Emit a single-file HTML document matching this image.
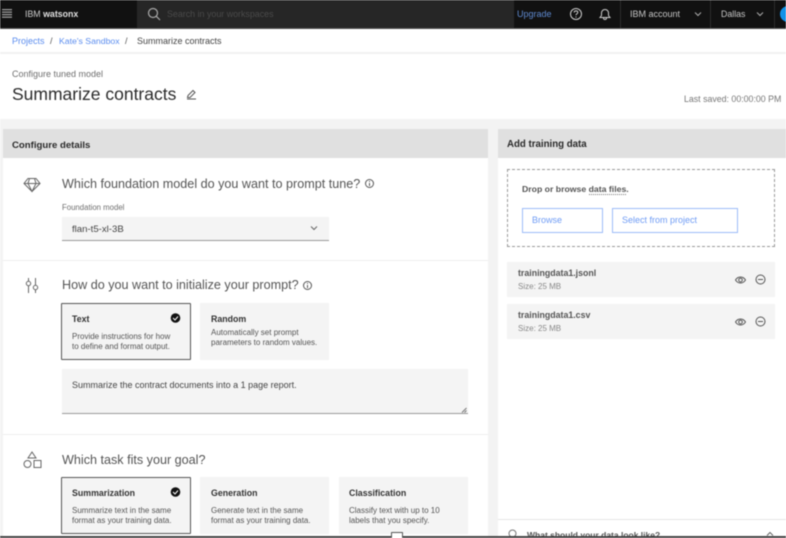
<!DOCTYPE html>
<html><head><meta charset="utf-8"><style>
html,body{margin:0;padding:0;background:#fff}
#p{position:relative;width:786px;height:538px;overflow:hidden;background:#fff;font-family:"Liberation Sans",sans-serif;color:#333;filter:blur(.45px)}
#p div,#p svg{position:absolute}
.t{white-space:nowrap;line-height:1}
.card{background:#f4f4f4;box-sizing:border-box}
.sel{border:1.2px solid #555;border-radius:1px}
.h{font-size:12.6px;color:#555}
.b{font-size:8.8px;font-weight:bold;color:#333}
.s{font-size:8px;color:#555;line-height:10px;white-space:nowrap}
</style></head><body><div id="p">
<div style="left:0;top:0;width:786px;height:28px;background:#111"></div>
<div style="left:137px;top:0;width:377px;height:28px;background:#262626"></div>
<div style="left:0;top:28px;width:786px;height:1px;background:#555"></div>
<svg style="left:2px;top:8px" width="11" height="12" fill="#999"><rect y="1" width="10" height="1.3"/><rect y="3.5" width="10" height="1.3"/><rect y="6" width="10" height="1.3"/><rect y="8.5" width="10" height="1.3"/></svg>
<div class="t" style="left:25px;top:10px;font-size:8.8px;color:#ccc">IBM <b style="color:#e0e0e0">watsonx</b></div>
<svg style="left:147px;top:7px" width="14" height="14" fill="none" stroke="#aaa" stroke-width="1.2"><circle cx="6" cy="6" r="4.5"/><path d="M9.3 9.3L13 13"/></svg>
<div class="t" style="left:167px;top:10px;font-size:8.9px;color:#4a4a4a">Search in your workspaces</div>
<div class="t" style="left:517px;top:10px;font-size:9px;color:#5f8ad0">Upgrade</div>
<svg style="left:569px;top:7px" width="14" height="14" fill="none" stroke="#ccc" stroke-width="1"><circle cx="7" cy="7" r="5.5"/><path d="M5.2 5.5C5.2 3.4 8.8 3.4 8.8 5.5C8.8 6.8 7 6.8 7 8.3M7 9.5v1"/></svg>
<svg style="left:598px;top:7px" width="14" height="14" fill="none" stroke="#ccc" stroke-width="1"><path d="M2 10.5L3.5 8.5V6A3.5 3.5 0 0 1 10.5 6V8.5L12 10.5ZM5.5 11A1.5 1.5 0 0 0 8.5 11"/></svg>
<div style="left:620px;top:0;width:1px;height:28px;background:#2c2c2c"></div>
<div class="t" style="left:630px;top:10px;font-size:9px;color:#c6c6c6">IBM account</div>
<svg style="left:693px;top:11px" width="10" height="6" fill="none" stroke="#aaa"><path d="M2 1.5L5 4.5L8 1.5"/></svg>
<div style="left:710px;top:0;width:1px;height:28px;background:#2c2c2c"></div>
<div class="t" style="left:721px;top:10px;font-size:8.8px;color:#c6c6c6">Dallas</div>
<svg style="left:755px;top:11px" width="10" height="6" fill="none" stroke="#aaa"><path d="M2 1.5L5 4.5L8 1.5"/></svg>
<div style="left:774px;top:0;width:1px;height:28px;background:#2c2c2c"></div>
<div style="left:780px;top:6px;width:16px;height:16px;border-radius:50%;background:#1192e8"></div>

<div class="t" style="left:12px;top:37px;font-size:9px;color:#5b8def">Projects</div>
<div class="t" style="left:50px;top:37px;font-size:9px;color:#555">/</div>
<div class="t" style="left:59px;top:37px;font-size:8.7px;color:#5b8def">Kate's Sandbox</div>
<div class="t" style="left:125px;top:37px;font-size:9px;color:#555">/</div>
<div class="t" style="left:137px;top:37px;font-size:9px;color:#444">Summarize contracts</div>
<div style="left:0;top:52px;width:786px;height:2px;background:#f2f2f2"></div>
<div class="t" style="left:12px;top:70px;font-size:9px;color:#6f6f6f">Configure tuned model</div>
<div class="t" style="left:12px;top:86px;font-size:17.5px;color:#2b2b2b">Summarize contracts</div>
<svg style="left:186px;top:89px" width="11" height="11" fill="none" stroke="#555"><path d="M1.5 8.5L2 6.5L7 1.5L9 3.5L4 8.5ZM1 10h9"/></svg>
<div class="t" style="left:684px;top:95px;font-size:8.8px;color:#777">Last saved: 00:00:00 PM</div>

<div style="left:0;top:119px;width:786px;height:419px;background:#f3f3f3"></div>
<div style="left:3px;top:129px;width:485px;height:409px;background:#fff"></div>
<div style="left:3px;top:129px;width:485px;height:29px;background:#e0e0e0"></div>
<div class="t" style="left:12px;top:140px;font-size:9.6px;font-weight:bold;color:#2a2a2a;margin-top:1px">Configure details</div>
<div style="left:498px;top:129px;width:288px;height:409px;background:#fff"></div>
<div style="left:498px;top:129px;width:288px;height:29px;background:#e0e0e0"></div>
<div class="t" style="left:507px;top:140px;font-size:9.7px;font-weight:bold;color:#2a2a2a">Add training data</div>

<svg style="left:23px;top:177px" width="18" height="16" fill="none" stroke="#666"><path d="M5 1.5H13L17 6.5L9 14.5L1 6.5ZM1 6.5H17M6.5 1.5L5 6.5L9 14.5L13 6.5L11.5 1.5"/></svg>
<div class="t h" style="left:62px;top:178px">Which foundation model do you want to prompt tune?</div>
<svg style="left:364px;top:178px" width="11" height="11" fill="none" stroke="#555"><circle cx="5.5" cy="5.5" r="4"/><path d="M5.5 5v3M5.5 3v1"/></svg>
<div class="t" style="left:62px;top:204px;font-size:7.8px;color:#6f6f6f">Foundation model</div>
<div class="card" style="left:62px;top:217px;width:267px;height:24px;border-bottom:1px solid #999"></div>
<div class="t" style="left:72px;top:225px;font-size:9.6px;color:#444">flan-t5-xl-3B</div>
<svg style="left:309px;top:225px" width="10" height="7" fill="none" stroke="#666"><path d="M2 1.5L5 4.5L8 1.5"/></svg>
<div style="left:3px;top:260px;width:485px;height:1px;background:#eee"></div>

<svg style="left:24px;top:277px" width="16" height="18" fill="none" stroke="#666"><path d="M4.5 1v3M4.5 9v7M11.5 1v7M11.5 13v3"/><circle cx="4.5" cy="6.5" r="2.2"/><circle cx="11.5" cy="10.5" r="2.2"/></svg>
<div class="t h" style="left:62px;top:279px">How do you want to initialize your prompt?</div>
<svg style="left:302px;top:280px" width="11" height="11" fill="none" stroke="#555"><circle cx="5.5" cy="5.5" r="4"/><path d="M5.5 5v3M5.5 3v1"/></svg>
<div class="card sel" style="left:61px;top:303px;width:130px;height:57px"></div>
<div class="t b" style="left:72px;top:315px">Text</div>
<svg style="left:170px;top:313px" width="11" height="10"><circle cx="5.5" cy="5" r="4.8" fill="#111"/><path d="M3 5L5 7L8 3.5" fill="none" stroke="#fff"/></svg>
<div class="s" style="left:72px;top:332px">Provide instructions for how<br>to define and format output.</div>
<div class="card" style="left:200px;top:303px;width:129px;height:57px"></div>
<div class="t b" style="left:211px;top:315px">Random</div>
<div class="s" style="left:211px;top:328px">Automatically set prompt<br>parameters to random values.</div>
<div class="card" style="left:62px;top:369px;width:406px;height:45px;border-bottom:1px solid #999"></div>
<div class="t" style="left:72px;top:381px;font-size:9px;color:#444">Summarize the contract documents into a 1 page report.</div>
<svg style="left:461px;top:407px" width="6" height="6" stroke="#777" fill="none"><path d="M1 5.5L5.5 1M3.5 5.5L5.5 3.5"/></svg>
<div style="left:3px;top:434px;width:485px;height:1px;background:#eee"></div>

<svg style="left:22px;top:450px" width="20" height="20" fill="none" stroke="#666"><path d="M10 2L14 8H6Z"/><circle cx="5.5" cy="14" r="3.5"/><rect x="12" y="10.5" width="7" height="7"/></svg>
<div class="t h" style="left:62px;top:454px">Which task fits your goal?</div>
<div class="card sel" style="left:61px;top:477px;width:130px;height:57px"></div>
<div class="t b" style="left:72px;top:489px">Summarization</div>
<svg style="left:170px;top:487px" width="11" height="10"><circle cx="5.5" cy="5" r="4.8" fill="#111"/><path d="M3 5L5 7L8 3.5" fill="none" stroke="#fff"/></svg>
<div class="s" style="left:72px;top:506px">Summarize text in the same<br>format as your training data.</div>
<div class="card" style="left:200px;top:477px;width:129px;height:57px"></div>
<div class="t b" style="left:211px;top:489px">Generation</div>
<div class="s" style="left:211px;top:506px">Generate text in the same<br>format as your training data.</div>
<div class="card" style="left:339px;top:477px;width:129px;height:57px"></div>
<div class="t b" style="left:349px;top:489px">Classification</div>
<div class="s" style="left:349px;top:506px">Classify text with up to 10<br>labels that you specify.</div>

<div style="left:507px;top:169px;width:268px;height:78px;border:1px dashed #999;box-sizing:border-box"></div>
<div class="t" style="left:522px;top:185px;font-size:8.7px;font-weight:bold;color:#555">Drop or browse <span style="border-bottom:1px dotted #777">data files</span>.</div>
<div style="left:522px;top:208px;width:81px;height:25px;border:1.5px solid #9dbcf8;box-sizing:border-box"></div>
<div class="t" style="left:532px;top:216px;font-size:9px;color:#6f9cf5">Browse</div>
<div style="left:612px;top:208px;width:126px;height:25px;border:1.5px solid #9dbcf8;box-sizing:border-box"></div>
<div class="t" style="left:622px;top:216px;font-size:9px;color:#6f9cf5">Select from project</div>

<div class="card" style="left:507px;top:262px;width:268px;height:35px"></div>
<div class="t" style="left:518px;top:269px;font-size:8.8px;font-weight:bold;color:#555">trainingdata1.jsonl</div>
<div class="t" style="left:518px;top:283px;font-size:8px;color:#888">Size: 25 MB</div>
<div class="card" style="left:507px;top:304px;width:268px;height:35px"></div>
<div class="t" style="left:518px;top:311px;font-size:8.8px;font-weight:bold;color:#555">trainingdata1.csv</div>
<div class="t" style="left:518px;top:325px;font-size:8px;color:#888">Size: 25 MB</div>
<svg style="left:735px;top:275px" width="11" height="10" fill="none" stroke="#555"><path d="M.5 5C3 1 8 1 10.5 5C8 9 3 9 .5 5Z"/><circle cx="5.5" cy="5" r="1.8"/></svg>
<svg style="left:755px;top:274px" width="11" height="11" fill="none" stroke="#555"><circle cx="5.5" cy="5.5" r="4.5"/><path d="M3 5.5h5"/></svg>
<svg style="left:735px;top:317px" width="11" height="10" fill="none" stroke="#555"><path d="M.5 5C3 1 8 1 10.5 5C8 9 3 9 .5 5Z"/><circle cx="5.5" cy="5" r="1.8"/></svg>
<svg style="left:755px;top:316px" width="11" height="11" fill="none" stroke="#555"><circle cx="5.5" cy="5.5" r="4.5"/><path d="M3 5.5h5"/></svg>

<div style="left:498px;top:519px;width:288px;height:1px;background:#e6e6e6"></div>
<svg style="left:508px;top:529px" width="10" height="8" fill="none" stroke="#777"><circle cx="4.5" cy="4.5" r="3.5"/></svg>
<div class="t" style="left:527px;top:531px;font-size:8.5px;font-weight:bold;color:#555">What should your data look like?</div>
<svg style="left:765px;top:531px" width="10" height="6" fill="none" stroke="#666"><path d="M2 4.5L5 1.5L8 4.5"/></svg>
<div style="left:0;top:536px;width:786px;height:2px;background:#444"></div>
<div style="left:391px;top:532px;width:12px;height:6px;background:#fff;border:1px solid #555;border-bottom:0;box-sizing:border-box;border-radius:1px 1px 0 0"></div>
</div></body></html>
